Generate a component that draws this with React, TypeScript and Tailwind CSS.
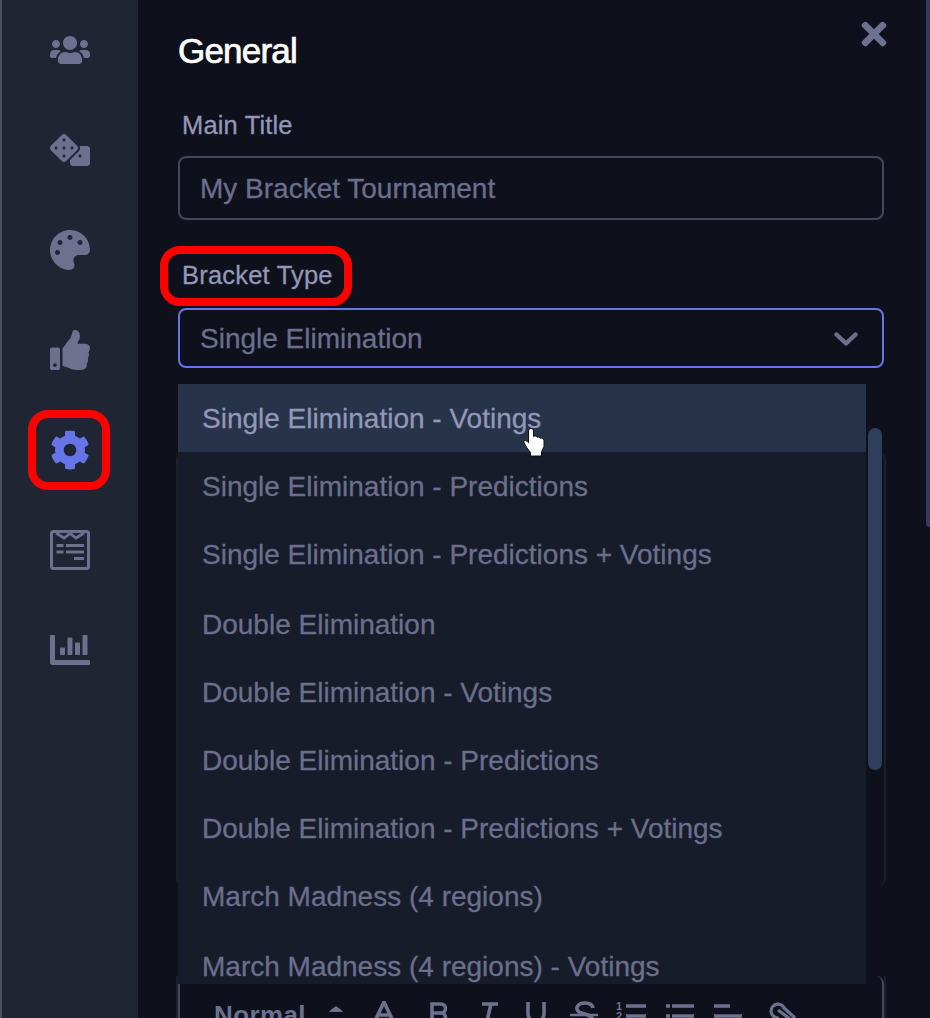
import { useState } from 'react'
import { FaUsers, FaDice, FaPalette, FaThumbsUp, FaCog, FaChartBar, FaTimes } from 'react-icons/fa'

const bracketTypes = [
  'Single Elimination - Votings',
  'Single Elimination - Predictions',
  'Single Elimination - Predictions + Votings',
  'Double Elimination',
  'Double Elimination - Votings',
  'Double Elimination - Predictions',
  'Double Elimination - Predictions + Votings',
  'March Madness (4 regions)',
  'March Madness (4 regions) - Votings',
]

function FormIcon() {
  return (
    <svg viewBox="0 0 40 40" className="size-10" fill="none" stroke="currentColor">
      <rect x="1.5" y="1.5" width="37" height="37" rx="2" strokeWidth="3" />
      <path d="M6 3l8 5 6-4.500 6 4.500 8-5" strokeWidth="2.800" />
      <path d="M6.500 15.500h7M16 15.500h18M6.500 22h7M16 22h18M24 28.500h10" strokeWidth="3.200" />
    </svg>
  )
}

const navItems = [
  { id: 'participants', icon: <FaUsers className="size-10" /> },
  { id: 'random', icon: <FaDice className="size-10" /> },
  { id: 'theme', icon: <FaPalette className="size-10" /> },
  { id: 'votes', icon: <FaThumbsUp className="size-10" /> },
  { id: 'general', icon: <FaCog className="size-10" /> },
  { id: 'form', icon: <FormIcon /> },
  { id: 'stats', icon: <FaChartBar className="size-10" /> },
]

function Sidebar({ active, onSelect }: { active: string; onSelect: (id: string) => void }) {
  return (
    <nav className="flex w-[138px] shrink-0 flex-col items-center gap-5 border-l-2 border-[#484f5d] bg-[#1f2532] pt-[10px]">
      {navItems.map((item) => (
        <button
          key={item.id}
          onClick={() => onSelect(item.id)}
          className={`relative flex h-20 w-[82px] items-center justify-center ${item.id === active ? 'text-[#6574e6]' : 'text-[#6d7190]'}`}
        >
          {item.icon}
          {item.id === active && (
            <span className="absolute top-0 -left-px h-20 w-[82px] rounded-[20px] border-8 border-[#ff0000]" />
          )}
        </button>
      ))}
    </nav>
  )
}

function HandCursor() {
  return (
    <svg viewBox="0 0 24 31" className="absolute top-[43px] left-[344px] h-[31px] w-6">
      <path
        d="M9 1.500c1.500 0 2.500 1 2.500 2.500v5.500c1-.9 3-.6 3.500.8 1.200-.8 3-.3 3.300 1 1.600-.6 3.700.2 3.700 2.400v6l-2.500 4.800V29H8.500v-3.500L5 21l-3-5.500c-.6-2 1.500-2.800 3-1.200l1.500 1.500V4c0-1.500 1-2.500 2.500-2.500z"
        fill="#fff"
        stroke="#111"
        strokeWidth="1"
      />
    </svg>
  )
}

function Toolbar() {
  return (
    <div className="flex h-[42px] items-start overflow-hidden rounded-t-lg border-x-2 border-[#45475a] pt-[24px] pl-[34px] text-[#6d7190]">
      <span className="w-[110px] shrink-0 text-[26px] leading-[30px] font-bold tracking-[0.4px]">Normal</span>
      <svg viewBox="0 0 560 30" className="mt-px h-[30px] w-[560px] shrink-0" fill="none" stroke="currentColor" strokeWidth="3.600">
        <path d="M5 11q1-2 7-6 6 4 7 6z" fill="currentColor" stroke="none" />
        <path d="M51 20l9-19 9 19M54 14h12" />
        <path d="M108 20V3h9a4.500 4.500 0 010 9h-9M117 12a4.500 4.500 0 010 9h-9" />
        <path d="M158 3h16M167 3l-4 17" />
        <path d="M204 1v12a8 8 0 0016 0V1" />
        <path d="M269 7q-1-5-8-5c-8 0-10 6-6 9 3 2 14 2 14 9" />
        <path d="M246 14h28" strokeWidth="2.400" />
        <path d="M302 5h20M302 15h20M342 5h4M348 5h22M342 15h4M348 15h22M390 5h16M390 15h28" />
        <text x="292" y="9" fontSize="11" fontWeight="bold" fill="currentColor" stroke="none">1</text>
        <text x="292" y="19" fontSize="11" fontWeight="bold" fill="currentColor" stroke="none">2</text>
        <path d="M455 17a7 7 0 1 1 6-8M454 9l16 12M459 6l12 11" strokeWidth="3.200" />
      </svg>
    </div>
  )
}

export default function App() {
  const [active, setActive] = useState('general')
  const [hovered, setHovered] = useState(0)

  return (
    <div className="flex h-[1018px] w-[930px] overflow-hidden bg-[#0e101c] font-['Liberation_Sans',Arial,sans-serif]">
      <Sidebar active={active} onSelect={setActive} />
      <main className="flex min-w-0 flex-1 flex-col pr-[42px] pl-10">
        <header className="flex h-[100px] justify-between pt-4">
          <h1 className="pt-[15px] text-[35px] leading-10 tracking-[-0.8px] text-white [-webkit-text-stroke:0.7px_white]">General</h1>
          <button aria-label="Close" className="-mr-2 h-9 w-9 text-[#6d7190]">
            <FaTimes className="size-9" />
          </button>
        </header>

        <label className="flex h-14 items-center pb-[6px] pl-1 text-[25.5px] tracking-[0.15px] text-[#9397b8] [-webkit-text-stroke:0.3px]">Main Title</label>
        <input
          readOnly
          value="My Bracket Tournament"
          className="h-16 rounded-lg border-2 border-[#45475a] bg-transparent px-5 pt-[2px] text-[28px] text-[#6b6f8d] outline-none [-webkit-text-stroke:0.3px]"
        />

        <div className="mt-[26px] -ml-[18px] flex h-[60px] w-[192px] items-center rounded-[20px] border-8 border-[#ff0000] pb-[2px] pl-[14px] text-[25.5px] tracking-[0.2px] whitespace-nowrap text-[#9397b8] [-webkit-text-stroke:0.3px]">
          Bracket Type
        </div>
        <div className="relative mt-[2px]">
          <button className="flex h-[60px] w-full items-center justify-between rounded-lg border-2 border-[#6574e6] pt-[2px] pr-6 pl-5 text-[28px] text-[#6b6f8d] [-webkit-text-stroke:0.3px]">
            Single Elimination
            <svg viewBox="0 0 24 14" className="h-[14px] w-6" fill="none" stroke="currentColor" strokeWidth="4.400" strokeLinecap="round" strokeLinejoin="round">
              <path d="M2.500 2.500L12 11.500l9.500-9" />
            </svg>
          </button>
          <div className="absolute top-[76px] left-0 z-10 flex h-[600px] w-[704px]">
            <ul className="h-[600px] w-[688px] overflow-hidden bg-[#161c29]">
              {bracketTypes.map((type, i) => (
                <li
                  key={type}
                  onMouseEnter={() => setHovered(i)}
                  className={`flex h-[68px] items-center pt-[2px] pl-6 text-[28px] whitespace-nowrap [-webkit-text-stroke:0.3px] ${i % 5 === 3 ? 'mt-[2px]' : ''} ${i === hovered ? 'bg-[#273349] text-[#9397b8]' : 'text-[#6b6f8d]'}`}
                >
                  {type}
                </li>
              ))}
            </ul>
            <div className="mt-11 ml-[2px] h-[342px] w-[14px] rounded-full bg-[#2f3e5c]" />
            <HandCursor />
          </div>
        </div>

        <section className="-mx-[2px] mt-[84px] h-[434px] shrink-0 rounded-lg border-x-2 border-[#1d1f2b]" />
        <div className="-mx-[2px] mt-[90px] border-x-2 border-[#1d1f2b]">
          <Toolbar />
        </div>
      </main>
      <div className="h-[527px] w-1 shrink-0 rounded-bl-full bg-[#2f3e5c]" />
    </div>
  )
}
